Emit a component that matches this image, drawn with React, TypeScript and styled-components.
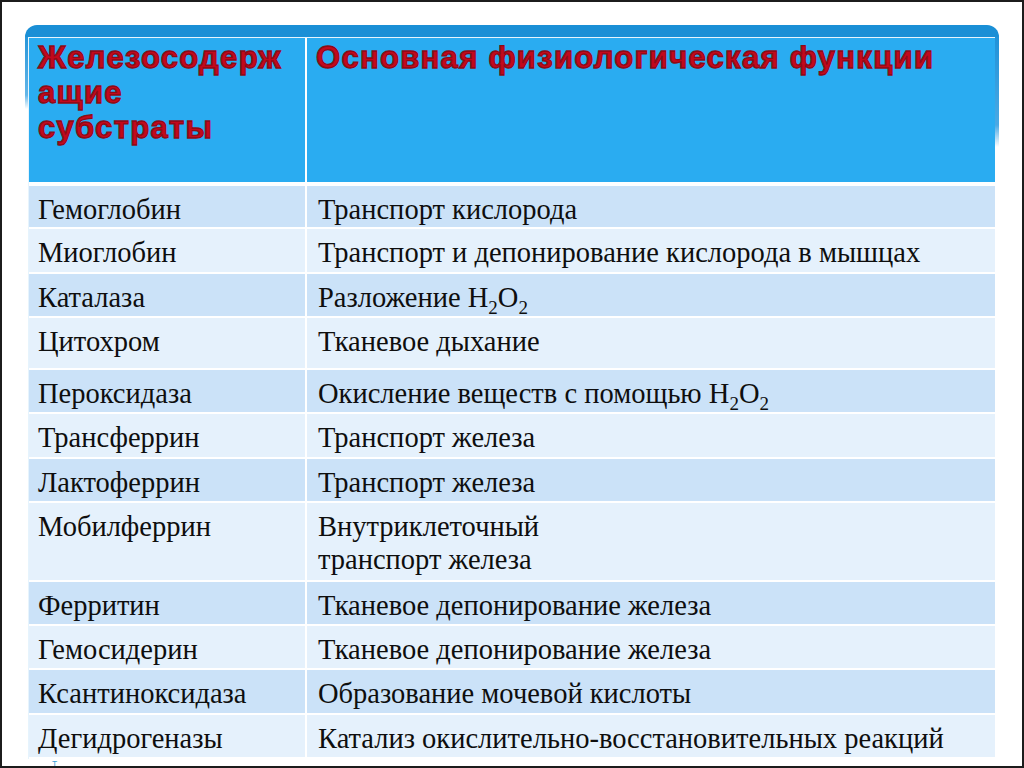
import styled, { createGlobalStyle } from 'styled-components';

interface RowData {
  name: string;
  func: React.ReactNode;
  height: number;
}

const H2O2 = () => (
  <>
    H<Sub>2</Sub>O<Sub>2</Sub>
  </>
);

const rows: RowData[] = [
  { name: 'Гемоглобин', func: 'Транспорт кислорода', height: 41 },
  { name: 'Миоглобин', func: 'Транспорт и депонирование кислорода в мышцах', height: 43 },
  { name: 'Каталаза', func: <>Разложение <H2O2 /></>, height: 42 },
  { name: 'Цитохром', func: 'Тканевое дыхание', height: 50 },
  { name: 'Пероксидаза', func: <>Окисление веществ с помощью <H2O2 /></>, height: 42 },
  { name: 'Трансферрин', func: 'Транспорт железа', height: 43 },
  { name: 'Лактоферрин', func: 'Транспорт железа', height: 42 },
  {
    name: 'Мобилферрин',
    func: (
      <>
        Внутриклеточный
        <br />
        транспорт железа
      </>
    ),
    height: 77,
  },
  { name: 'Ферритин', func: 'Тканевое депонирование железа', height: 42 },
  { name: 'Гемосидерин', func: 'Тканевое депонирование железа', height: 42 },
  { name: 'Ксантиноксидаза', func: 'Образование мочевой кислоты', height: 43 },
  { name: 'Дегидрогеназы', func: 'Катализ окислительно-восстановительных реакций', height: 42 },
];

const App = () => {
  return (
    <>
      <GlobalStyle />
      <Page>
        <Frame>
          <Table>
            <HeadCell>
              Железосодерж
              <br />
              ащие
              <br />
              субстраты
            </HeadCell>
            <HeadCell>Основная физиологическая функции</HeadCell>
            {rows.map((row, i) => (
              <Row key={row.name} $height={row.height} $dark={i % 2 === 0}>
                <Cell>{row.name}</Cell>
                <Cell $second>{row.func}</Cell>
              </Row>
            ))}
          </Table>
          <Mark>ᴛ</Mark>
        </Frame>
      </Page>
    </>
  );
};

const GlobalStyle = createGlobalStyle`
  html, body {
    margin: 0;
    padding: 0;
    background: #ffffff;
  }
`;

const Page = styled.div`
  width: 1024px;
  height: 768px;
  box-sizing: border-box;
  border: 2px solid #1c1c1c;
  background: #ffffff;
  padding: 23px 0 0 23px;
  overflow: hidden;
`;

const Frame = styled.div`
  width: 974px;
  box-sizing: border-box;
  padding: 12px 4px 0 3px;
  border-radius: 12px 12px 0 0;
  background:
    linear-gradient(to bottom, #1a8fd6 0px, #1a8fd6 12px, transparent 12px) top / 100% 100% no-repeat,
    linear-gradient(to bottom, #1b8fd6 0px, #63b6e8 70px, rgba(255, 255, 255, 0) 84px) left top / 3px 100% no-repeat,
    linear-gradient(to bottom, #1b8fd6 0px, #4aa9e4 100px, rgba(255, 255, 255, 0) 122px) right top / 4px 100% no-repeat;
`;

const Table = styled.div`
  display: grid;
  grid-template-columns: 276px 688px;
  column-gap: 2px;
  background: #ffffff;
  border-top: 1px solid #e6f4fd;
  border-left: 1px solid #e6f4fd;
`;

const HeadCell = styled.div`
  height: 144px;
  box-sizing: border-box;
  background: #2aacf1;
  padding: 2px 6px 0 9px;
  font-family: 'Liberation Sans', Arial, sans-serif;
  font-weight: 700;
  font-size: 31px;
  line-height: 35px;
  letter-spacing: 1.3px;
  color: #c3081c;
  -webkit-text-stroke: 1.3px #8c0a16;
  margin-bottom: 4px;
  white-space: nowrap;
`;

const Row = styled.div<{ $height: number; $dark: boolean }>`
  display: contents;

  & > div {
    height: ${(p) => p.$height}px;
    background: ${(p) => (p.$dark ? '#cbe2f8' : '#e5f1fc')};
  }
`;

const Cell = styled.div<{ $second?: boolean }>`
  box-sizing: border-box;
  margin-bottom: 2px;
  padding: 7px 0 0 ${(p) => (p.$second ? 11 : 9)}px;
  font-family: 'Liberation Serif', 'Times New Roman', serif;
  font-size: 28.5px;
  line-height: 33px;
  color: #0e0e0e;
  white-space: nowrap;
`;

const Sub = styled.sub`
  font-size: 19px;
  line-height: 0;
  vertical-align: -7px;
`;

const Mark = styled.div`
  font-family: 'DejaVu Sans', sans-serif;
  font-size: 9px;
  line-height: 7px;
  height: 7px;
  color: #3b9fd8;
  padding: 1px 0 0 24px;
`;

export default App;
